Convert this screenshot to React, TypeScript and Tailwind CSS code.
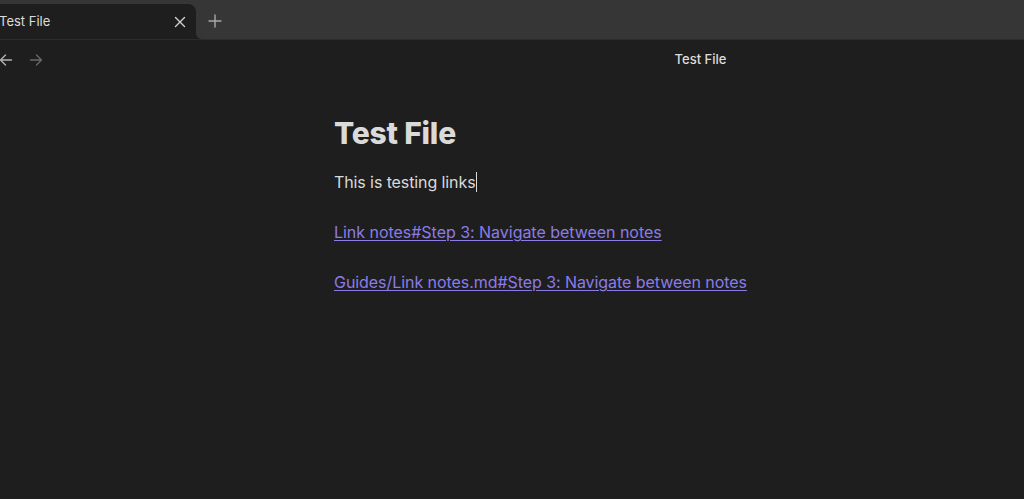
import React from 'react';

const App: React.FC = () => {
  return (
    <div className="w-full h-[499px] bg-[#1e1e1e] flex flex-col font-['Inter','Noto_Sans',sans-serif] overflow-hidden">
      {/* tab strip */}
      <div className="h-[40px] bg-[#363636] flex items-end border-b border-[#2c2c2c] shrink-0">
        <div className="w-[196px] h-[35px] bg-[#1e1e1e] rounded-tr-[8px] flex items-center justify-between pr-[10px]">
          <span className="text-[13px] text-[#dcdcdc] -ml-[1px]">Test File</span>
          <svg width="12" height="12" viewBox="0 0 12 12" className="text-[#d0d0d0]">
            <path d="M1.5 1.5L10.5 10.5M10.5 1.5L1.5 10.5" stroke="currentColor" strokeWidth="1.4" strokeLinecap="round" />
          </svg>
        </div>
        <div className="w-[6px] h-[6px] bg-[#1e1e1e]">
          <div className="w-full h-full bg-[#363636] rounded-bl-[6px]" />
        </div>
        <div className="h-[35px] flex items-center pl-[6px] pb-[2px]">
          <svg width="14" height="14" viewBox="0 0 14 14" className="text-[#a8a8a8]">
            <path d="M7 1V13M1 7H13" stroke="currentColor" strokeWidth="1.4" strokeLinecap="round" />
          </svg>
        </div>
      </div>

      {/* view header */}
      <div className="h-[38px] flex items-center shrink-0">
        <div className="flex items-center gap-[16px] -ml-[1px] pt-[1px]">
          <svg width="14" height="14" viewBox="0 0 14 14" className="text-[#b4b4b4]">
            <path d="M12.5 7H1.5M6.5 2L1.5 7L6.5 12" stroke="currentColor" strokeWidth="1.3" fill="none" strokeLinecap="round" strokeLinejoin="round" />
          </svg>
          <svg width="14" height="14" viewBox="0 0 14 14" className="text-[#6a6a6a]">
            <path d="M1.5 7H12.5M7.5 2L12.5 7L7.5 12" stroke="currentColor" strokeWidth="1.3" fill="none" strokeLinecap="round" strokeLinejoin="round" />
          </svg>
        </div>
        <div className="flex-1 flex justify-center pl-[334px] pt-[2px]">
          <span className="text-[13px] text-[#dcdcdc] font-medium">Test File</span>
        </div>
      </div>

      {/* note content */}
      <div className="pl-[334px] pt-[37px] flex flex-col">
        <h1 className="text-[30px] leading-[36px] font-extrabold text-[#dadada] tracking-[-0.2px]">Test File</h1>
        <p className="mt-[19px] text-[16px] leading-[24px] text-[#dadada] flex items-center tracking-[-0.1px]">
          This is testing links
          <span className="inline-block w-[1px] h-[20px] bg-[#dadada]" />
        </p>
        <a className="mt-[26px] text-[16px] leading-[24px] text-[#8a7ce8] underline underline-offset-[2px] decoration-[1px] w-fit tracking-[-0.03px]">
          Link notes#Step 3: Navigate between notes
        </a>
        <a className="mt-[26px] text-[16px] leading-[24px] text-[#8a7ce8] underline underline-offset-[2px] decoration-[1px] w-fit tracking-[-0.06px]">
          Guides/Link notes.md#Step 3: Navigate between notes
        </a>
      </div>
    </div>
  );
};

export default App;
